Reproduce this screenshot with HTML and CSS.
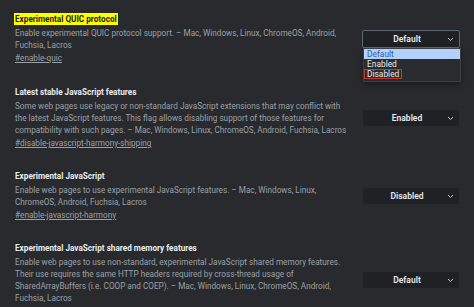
FILE: index.html
```html
<!DOCTYPE html>
<html>
<head>
<title>Experiments</title>
<meta name="viewport" content="width=device-width, initial-scale=1">
<link rel="stylesheet" href="styles.css">
</head>
<body>

<div class="flags">

  <div class="flag">
    <div class="flag-info">
      <div class="flag-name"><span class="hit">Experimental QUIC protocol</span></div>
      <p class="flag-desc">Enable experimental QUIC protocol support. – Mac, Windows, Linux, ChromeOS, Android,<br>Fuchsia, Lacros</p>
      <a class="flag-link" href="#enable-quic">#enable-quic</a>
    </div>
    <div class="picker open">
      <div class="choice">Default
        <svg class="chev" width="7" height="5" viewBox="0 0 7 5"><polyline points="1,1 3.5,3.5 6,1" fill="none" stroke="#c4c7cc" stroke-width="1"/></svg>
      </div>
      <div class="options">
        <div class="opt sel">Default</div>
        <div class="opt">Enabled</div>
        <div class="opt"><span class="mark">Disabled</span></div>
      </div>
    </div>
  </div>

  <div class="flag second">
    <div class="flag-info">
      <div class="flag-name">Latest stable JavaScript features</div>
      <p class="flag-desc">Some web pages use legacy or non-standard JavaScript extensions that may conflict with<br>the latest JavaScript features. This flag allows disabling support of those features for<br>compatibility with such pages. – Mac, Windows, Linux, ChromeOS, Android, Fuchsia, Lacros</p>
      <a class="flag-link" href="#disable-javascript-harmony-shipping">#disable-javascript-harmony-shipping</a>
    </div>
    <div class="picker">
      <div class="choice">Enabled
        <svg class="chev" width="7" height="5" viewBox="0 0 7 5"><polyline points="1,1 3.5,3.5 6,1" fill="none" stroke="#c4c7cc" stroke-width="1"/></svg>
      </div>
    </div>
  </div>

  <div class="flag">
    <div class="flag-info">
      <div class="flag-name">Experimental JavaScript</div>
      <p class="flag-desc">Enable web pages to use experimental JavaScript features. – Mac, Windows, Linux,<br>ChromeOS, Android, Fuchsia, Lacros</p>
      <a class="flag-link" href="#enable-javascript-harmony">#enable-javascript-harmony</a>
    </div>
    <div class="picker">
      <div class="choice">Disabled
        <svg class="chev" width="7" height="5" viewBox="0 0 7 5"><polyline points="1,1 3.5,3.5 6,1" fill="none" stroke="#c4c7cc" stroke-width="1"/></svg>
      </div>
    </div>
  </div>

  <div class="flag">
    <div class="flag-info">
      <div class="flag-name">Experimental JavaScript shared memory features</div>
      <p class="flag-desc">Enable web pages to use non-standard, experimental JavaScript shared memory features.<br>Their use requires the same HTTP headers required by cross-thread usage of<br>SharedArrayBuffers (i.e. COOP and COEP). – Mac, Windows, Linux, ChromeOS, Android,<br>Fuchsia, Lacros</p>
      <a class="flag-link" href="#enable-javascript-experimental-shared-memory">#enable-javascript-experimental-shared-memory</a>
    </div>
    <div class="picker">
      <div class="choice">Default
        <svg class="chev" width="7" height="5" viewBox="0 0 7 5"><polyline points="1,1 3.5,3.5 6,1" fill="none" stroke="#c4c7cc" stroke-width="1"/></svg>
      </div>
    </div>
  </div>

</div>

</body>
</html>
```

FILE: styles.css
```css
body {
  margin: 0;
  background-color: #292a2d;
  font-family: Roboto, "Liberation Sans", Arial, sans-serif;
  overflow: hidden;
}

.flags {
  padding: 13px 15px 0 15px;
  display: flex;
  flex-direction: column;
  gap: 21px;
}

/* one flag row: text on the left, picker on the right */
.flag {
  display: flex;
  align-items: center;
  justify-content: space-between;
}

.flag.second {
  margin-top: 1px;
}

.flag-info {
  width: 340px;
  white-space: nowrap;
}

.flag-name {
  font-size: 8.2px;
  font-weight: bold;
  line-height: 12px;
  color: #e8eaed;
  margin-bottom: 2px;
}

.hit {
  background-color: #ffff00;
  color: #202124;
  padding: 1px 1px;
  margin-left: -1px;
}

.flag-desc {
  margin: 0;
  font-size: 8.2px;
  line-height: 12px;
  color: #9aa0a6;
}

.flag-link {
  display: block;
  margin-top: 1px;
  font-size: 8.2px;
  line-height: 12px;
  color: #9aa0a6;
  text-decoration: underline;
}

/* the select box */
.picker {
  position: relative;
  width: 96px;
}

.choice {
  position: relative;
  height: 16px;
  line-height: 16px;
  background-color: #202124;
  color: #e8eaed;
  font-size: 8.5px;
  font-weight: 600;
  text-align: center;
  padding-right: 8px;
  border-radius: 2px;
}

.chev {
  position: absolute;
  right: 5px;
  top: 6px;
}

.picker.open .choice {
  border: 1px solid #5a6678;
  margin: -1px;
}

.options {
  position: absolute;
  top: 17px;
  left: 0;
  width: 96px;
  background-color: #2b2c2f;
  border: 1px solid #3c4043;
  box-shadow: 0 3px 6px rgba(0, 0, 0, 0.35);
  font-size: 8.4px;
  line-height: 10px;
  color: #e8eaed;
  padding-bottom: 2px;
}

.opt {
  padding-left: 3px;
}

.opt.sel {
  background-color: #b3d1fb;
  color: #2f5fa8;
}

.mark {
  display: inline-block;
  border: 1px solid #c0392b;
  margin-left: -3px;
  padding: 0 2px;
  line-height: 8px;
}
```
